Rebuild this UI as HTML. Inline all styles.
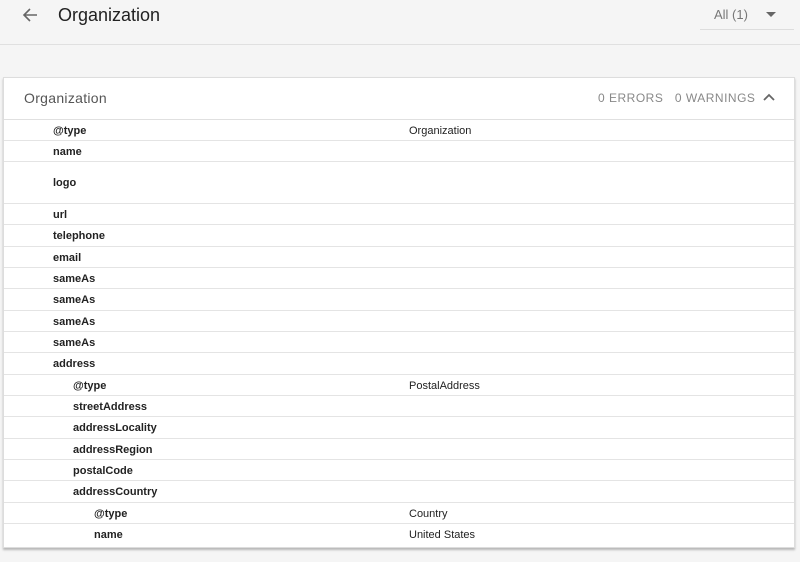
<!DOCTYPE html>
<html><head><style>
body{margin:0;width:800px;height:562px;background:#f5f5f5;font-family:"Liberation Sans",sans-serif;position:relative;overflow:hidden}
.hdr{position:absolute;left:0;top:0;width:800px;height:44px;border-bottom:1px solid #e0e0e0;background:#f5f5f5}
.title{position:absolute;left:58px;top:5px;font-size:18px;color:#222}
.arrow{position:absolute;left:22px;top:7px}
.all{position:absolute;left:700px;top:0;width:94px;height:29px;border-bottom:1px solid #ddd;font-size:13px;color:#777}
.card{position:absolute;left:3px;top:77px;width:790px;height:469px;background:#fff;border:1px solid #ddd;box-shadow:0 2px 2px rgba(0,0,0,.25)}
.ch{position:absolute;left:0;top:0;width:790px;height:41px;border-bottom:1px solid #e0e0e0}
.row{position:absolute;left:0;width:790px;border-bottom:1px solid #e4e4e4;font-size:11px;color:#222}
.k{position:absolute;font-weight:bold}
.v{position:absolute;left:405px}
.row span{margin-top:1px}
</style></head><body>
<div class="hdr">
<svg class="arrow" width="16" height="16" viewBox="0 0 16 16"><path d="M15 8H2M8 2L2 8l6 6" stroke="#666" stroke-width="1.6" fill="none"/></svg>
<div class="title">Organization</div>
<div class="all"><span style="position:absolute;left:14px;top:7px">All (1)</span><span style="position:absolute;left:66px;top:12px;width:0;height:0;border-left:5px solid transparent;border-right:5px solid transparent;border-top:5px solid #666"></span></div>
</div>
<div class="card">
<div class="ch"><span style="position:absolute;left:20px;top:12px;font-size:14px;color:#555;letter-spacing:.3px">Organization</span>
<span style="position:absolute;left:594px;top:13px;font-size:12px;color:#888;letter-spacing:.5px">0 ERRORS &nbsp;&nbsp;0 WARNINGS</span>
<svg style="position:absolute;left:759px;top:15px" width="12" height="10" viewBox="0 0 12 10"><path d="M1 7l5-5 5 5" stroke="#666" stroke-width="1.8" fill="none"/></svg></div>
<div class="row" style="top:42px;height:20px"><span class="k" style="left:49px;top:4px">@type</span><span class="v" style="top:4px">Organization</span></div>
<div class="row" style="top:63px;height:20px"><span class="k" style="left:49px;top:4px">name</span></div>
<div class="row" style="top:84px;height:41px"><span class="k" style="left:49px;top:14px">logo</span></div>
<div class="row" style="top:126px;height:20px"><span class="k" style="left:49px;top:4px">url</span></div>
<div class="row" style="top:147px;height:21px"><span class="k" style="left:49px;top:4px">telephone</span></div>
<div class="row" style="top:169px;height:20px"><span class="k" style="left:49px;top:4px">email</span></div>
<div class="row" style="top:190px;height:20px"><span class="k" style="left:49px;top:4px">sameAs</span></div>
<div class="row" style="top:211px;height:21px"><span class="k" style="left:49px;top:4px">sameAs</span></div>
<div class="row" style="top:233px;height:20px"><span class="k" style="left:49px;top:4px">sameAs</span></div>
<div class="row" style="top:254px;height:20px"><span class="k" style="left:49px;top:4px">sameAs</span></div>
<div class="row" style="top:275px;height:21px"><span class="k" style="left:49px;top:4px">address</span></div>
<div class="row" style="top:297px;height:20px"><span class="k" style="left:69px;top:4px">@type</span><span class="v" style="top:4px">PostalAddress</span></div>
<div class="row" style="top:318px;height:20px"><span class="k" style="left:69px;top:4px">streetAddress</span></div>
<div class="row" style="top:339px;height:21px"><span class="k" style="left:69px;top:4px">addressLocality</span></div>
<div class="row" style="top:361px;height:20px"><span class="k" style="left:69px;top:4px">addressRegion</span></div>
<div class="row" style="top:382px;height:20px"><span class="k" style="left:69px;top:4px">postalCode</span></div>
<div class="row" style="top:403px;height:21px"><span class="k" style="left:69px;top:4px">addressCountry</span></div>
<div class="row" style="top:425px;height:20px"><span class="k" style="left:90px;top:4px">@type</span><span class="v" style="top:4px">Country</span></div>
<div class="row" style="top:446px;height:21px;border-bottom:none"><span class="k" style="left:90px;top:4px">name</span><span class="v" style="top:4px">United States</span></div>
</div>
</body></html>
